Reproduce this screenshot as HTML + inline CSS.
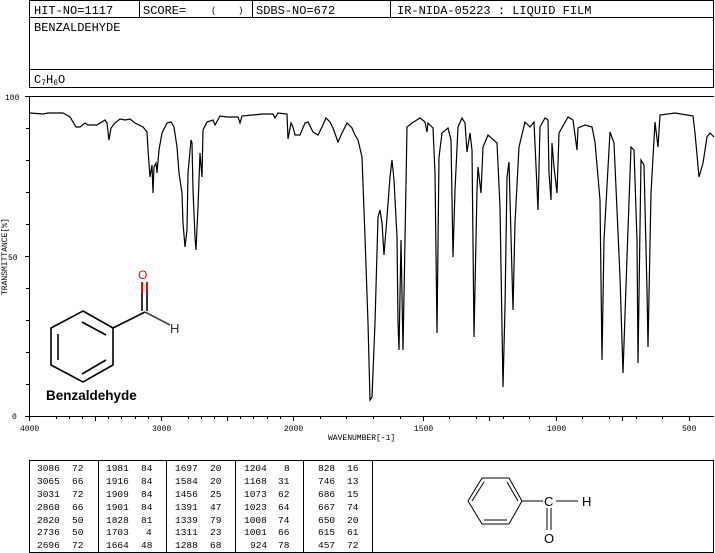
<!DOCTYPE html>
<html><head><meta charset="utf-8"><style>
html,body{margin:0;padding:0;background:#fff;width:715px;height:553px;overflow:hidden}
svg{display:block}
text{font-family:"Liberation Mono",monospace;fill:#000}
text.s{font-family:"Liberation Sans",sans-serif}
</style></head><body>
<svg width="715" height="553" viewBox="0 0 715 553" xmlns="http://www.w3.org/2000/svg">
<g fill="none" stroke="#000" stroke-width="1" shape-rendering="crispEdges">
<rect x="29.5" y="0.5" width="684" height="87"/>
<line x1="29.5" y1="17.5" x2="713.5" y2="17.5"/>
<line x1="139.5" y1="0" x2="139.5" y2="17"/>
<line x1="252.5" y1="0" x2="252.5" y2="17"/>
<line x1="390.5" y1="0" x2="390.5" y2="17"/>
<line x1="29.5" y1="69.5" x2="713.5" y2="69.5"/>
<polyline points="714,96.5 29.5,96.5 29.5,416.5 714,416.5"/>
<rect x="29.5" y="460.5" width="684" height="92"/>
<line x1="98.5" y1="460" x2="98.5" y2="553"/>
<line x1="166.5" y1="460" x2="166.5" y2="553"/>
<line x1="235.5" y1="460" x2="235.5" y2="553"/>
<line x1="303.5" y1="460" x2="303.5" y2="553"/>
<line x1="372.5" y1="460" x2="372.5" y2="553"/>
<path d="M25 96.5H30M25 256.5H30M25 416.5H30M26 128.5H30M26 160.5H30M26 192.5H30M26 224.5H30M26 288.5H30M26 320.5H30M26 352.5H30M26 384.5H30
M29.5 417V421M161.5 417V421M293.5 417V421M423.5 417V421M556.5 417V421M689.5 417V421
M95.5 417V421M227.5 417V421M489.5 417V421M622.5 417V421
M56.5 417V419M69.5 417V419M82.5 417V419M108.5 417V419M121.5 417V419M135.5 417V419M148.5 417V419M188.5 417V419M201.5 417V419M214.5 417V419M240.5 417V419M253.5 417V419M267.5 417V419M280.5 417V419M320.5 417V419M346.5 417V419M373.5 417V419M400.5 417V419M449.5 417V419M476.5 417V419M503.5 417V419M529.5 417V419M582.5 417V419M609.5 417V419M636.5 417V419M662.5 417V419"/>
</g>
<g font-size="12">
<text x="34" y="14">HIT-NO=1117</text>
<text x="143" y="14">SCORE=</text>
<text x="211" y="13" font-size="9">(</text>
<text x="238" y="13" font-size="9">)</text>
<text x="256" y="14">SDBS-NO=672</text>
<text x="397" y="14">IR-NIDA-05223 : LIQUID FILM</text>
<text x="34" y="31">BENZALDEHYDE</text>
<text x="34" y="83">C<tspan font-size="8" dy="2">7</tspan><tspan dy="-2">H</tspan><tspan font-size="8" dy="2">6</tspan><tspan dy="-2">O</tspan></text>
</g>
<g font-size="8">
<text x="5" y="100">100</text>
<text x="8" y="260">50</text>
<text x="12" y="419">0</text>
<text x="20" y="431">4000</text>
<text x="152" y="431">3000</text>
<text x="284" y="431">2000</text>
<text x="414" y="431">1500</text>
<text x="547" y="431">1000</text>
<text x="682" y="431">500</text>
<text x="328" y="440">WAVENUMBER[-1]</text>
<text transform="translate(7,295) rotate(-90)">TRANSMITTANCE[%]</text>
</g>
<polyline fill="none" stroke="#000" stroke-width="1.2" points="30,113 43,114 48,113 63,113 70,117 76,127 80,127 85,123 88,125 97,125 105,120 107,123 109,140 111,128 115,123 120,119 125,120 130,119 135,123 143,127 147,132 148,150 150,177 152,165 153,193 154,167 156,163 157,173 159,150 162,133 167,123 171,122 174,127 177,147 179,173 182,193 183,223 185,247 187,230 188,173 191,140 192,143 193,190 195,237 196,250 198,207 200,153 202,177 203,130 207,122 213,120 215,125 220,116 227,117 238,117 240,123 242,116 263,114 273,114 275,118 278,113 287,114 288,139 291,123 293,127 295,135 300,135 305,123 308,122 313,132 318,135 322,127 326,118 330,122 333,128 338,142 342,133 347,123 352,128 355,135 358,140 362,157 365,237 368,323 370,400 372,397 375,323 378,217 380,210 382,223 384,255 387,217 390,177 392,160 394,180 397,237 398,323 399,350 401,240 403,350 405,240 407,127 412,123 420,118 425,122 427,132 428,123 433,128 435,173 437,333 439,157 442,133 448,128 451,140 453,257 455,190 458,127 462,118 465,123 467,152 470,133 472,150 474,337 477,190 478,167 481,193 483,147 488,135 497,143 500,207 503,387 505,307 507,177 509,162 513,310 515,223 519,147 525,122 530,127 534,122 538,210 540,127 545,118 548,120 549,173 551,200 552,143 554,167 557,193 559,133 568,117 573,120 577,150 578,128 585,125 592,127 595,142 600,200 602,360 604,240 610,132 614,143 620,277 623,373 627,257 631,147 634,150 637,240 638,363 641,160 644,165 647,290 648,347 651,193 655,122 658,147 660,115 675,113 693,116 695,133 699,177 703,163 707,137 710,133 714,137"/>
<g fill="none" stroke="#000" stroke-width="1.6">
<polygon points="83,311 113,328 113,365 83,382 51,365 51,328"/>
<line x1="82" y1="322" x2="106" y2="335"/>
<line x1="58" y1="334" x2="58" y2="360"/>
<line x1="82" y1="374" x2="106" y2="360"/>
<line x1="113" y1="328" x2="145" y2="312"/>
<line x1="145" y1="312" x2="170" y2="325" stroke="#444"/>
<line x1="142" y1="282" x2="142" y2="311"/>
<line x1="147" y1="282" x2="147" y2="311"/>
</g>
<path d="M142 282V293M147 282V293" stroke="#e00" stroke-width="1.8"/>
<text class="s" x="138" y="279" style="font-size:12px;fill:#e00">O</text>
<text class="s" x="170" y="333" style="font-size:13px;fill:#333">H</text>
<text class="s" x="46" y="400" style="font-size:13.5px;font-weight:bold">Benzaldehyde</text>
<g font-size="9.5">
<text x="37" y="471">3086</text><text x="72" y="471">72</text>
<text x="37" y="484">3065</text><text x="72" y="484">66</text>
<text x="37" y="497">3031</text><text x="72" y="497">72</text>
<text x="37" y="510">2860</text><text x="72" y="510">66</text>
<text x="37" y="523">2820</text><text x="72" y="523">50</text>
<text x="37" y="535">2736</text><text x="72" y="535">50</text>
<text x="37" y="548">2696</text><text x="72" y="548">72</text>
<text x="106" y="471">1981</text><text x="141" y="471">84</text>
<text x="106" y="484">1916</text><text x="141" y="484">84</text>
<text x="106" y="497">1909</text><text x="141" y="497">84</text>
<text x="106" y="510">1901</text><text x="141" y="510">84</text>
<text x="106" y="523">1828</text><text x="141" y="523">81</text>
<text x="106" y="535">1703</text><text x="146" y="535">4</text>
<text x="106" y="548">1664</text><text x="141" y="548">48</text>
<text x="175" y="471">1697</text><text x="210" y="471">20</text>
<text x="175" y="484">1584</text><text x="210" y="484">20</text>
<text x="175" y="497">1456</text><text x="210" y="497">25</text>
<text x="175" y="510">1391</text><text x="210" y="510">47</text>
<text x="175" y="523">1339</text><text x="210" y="523">79</text>
<text x="175" y="535">1311</text><text x="210" y="535">23</text>
<text x="175" y="548">1288</text><text x="210" y="548">68</text>
<text x="244" y="471">1204</text><text x="284" y="471">8</text>
<text x="244" y="484">1168</text><text x="278" y="484">31</text>
<text x="244" y="497">1073</text><text x="278" y="497">62</text>
<text x="244" y="510">1023</text><text x="278" y="510">64</text>
<text x="244" y="523">1008</text><text x="278" y="523">74</text>
<text x="244" y="535">1001</text><text x="278" y="535">66</text>
<text x="250" y="548">924</text><text x="278" y="548">78</text>
<text x="318" y="471">828</text><text x="347" y="471">16</text>
<text x="318" y="484">746</text><text x="347" y="484">13</text>
<text x="318" y="497">686</text><text x="347" y="497">15</text>
<text x="318" y="510">667</text><text x="347" y="510">74</text>
<text x="318" y="523">650</text><text x="347" y="523">20</text>
<text x="318" y="535">615</text><text x="347" y="535">61</text>
<text x="318" y="548">457</text><text x="347" y="548">72</text>
</g>
<g fill="none" stroke="#000" stroke-width="1">
<polygon points="482,478 509,478 522,501 509,524 482,524 468,501"/>
<line x1="484" y1="482" x2="472" y2="501"/>
<line x1="507" y1="482" x2="518" y2="501"/>
<line x1="484" y1="520" x2="507" y2="520"/>
<line x1="522" y1="501" x2="543" y2="501"/>
<line x1="556" y1="501" x2="578" y2="501"/>
<line x1="547" y1="508" x2="547" y2="530"/>
<line x1="551" y1="508" x2="551" y2="530"/>
</g>
<text class="s" x="544" y="506" style="font-size:13px">C</text>
<text class="s" x="582" y="506" style="font-size:13px">H</text>
<text class="s" x="544" y="543" style="font-size:13px">O</text>
</svg>
</body></html>
